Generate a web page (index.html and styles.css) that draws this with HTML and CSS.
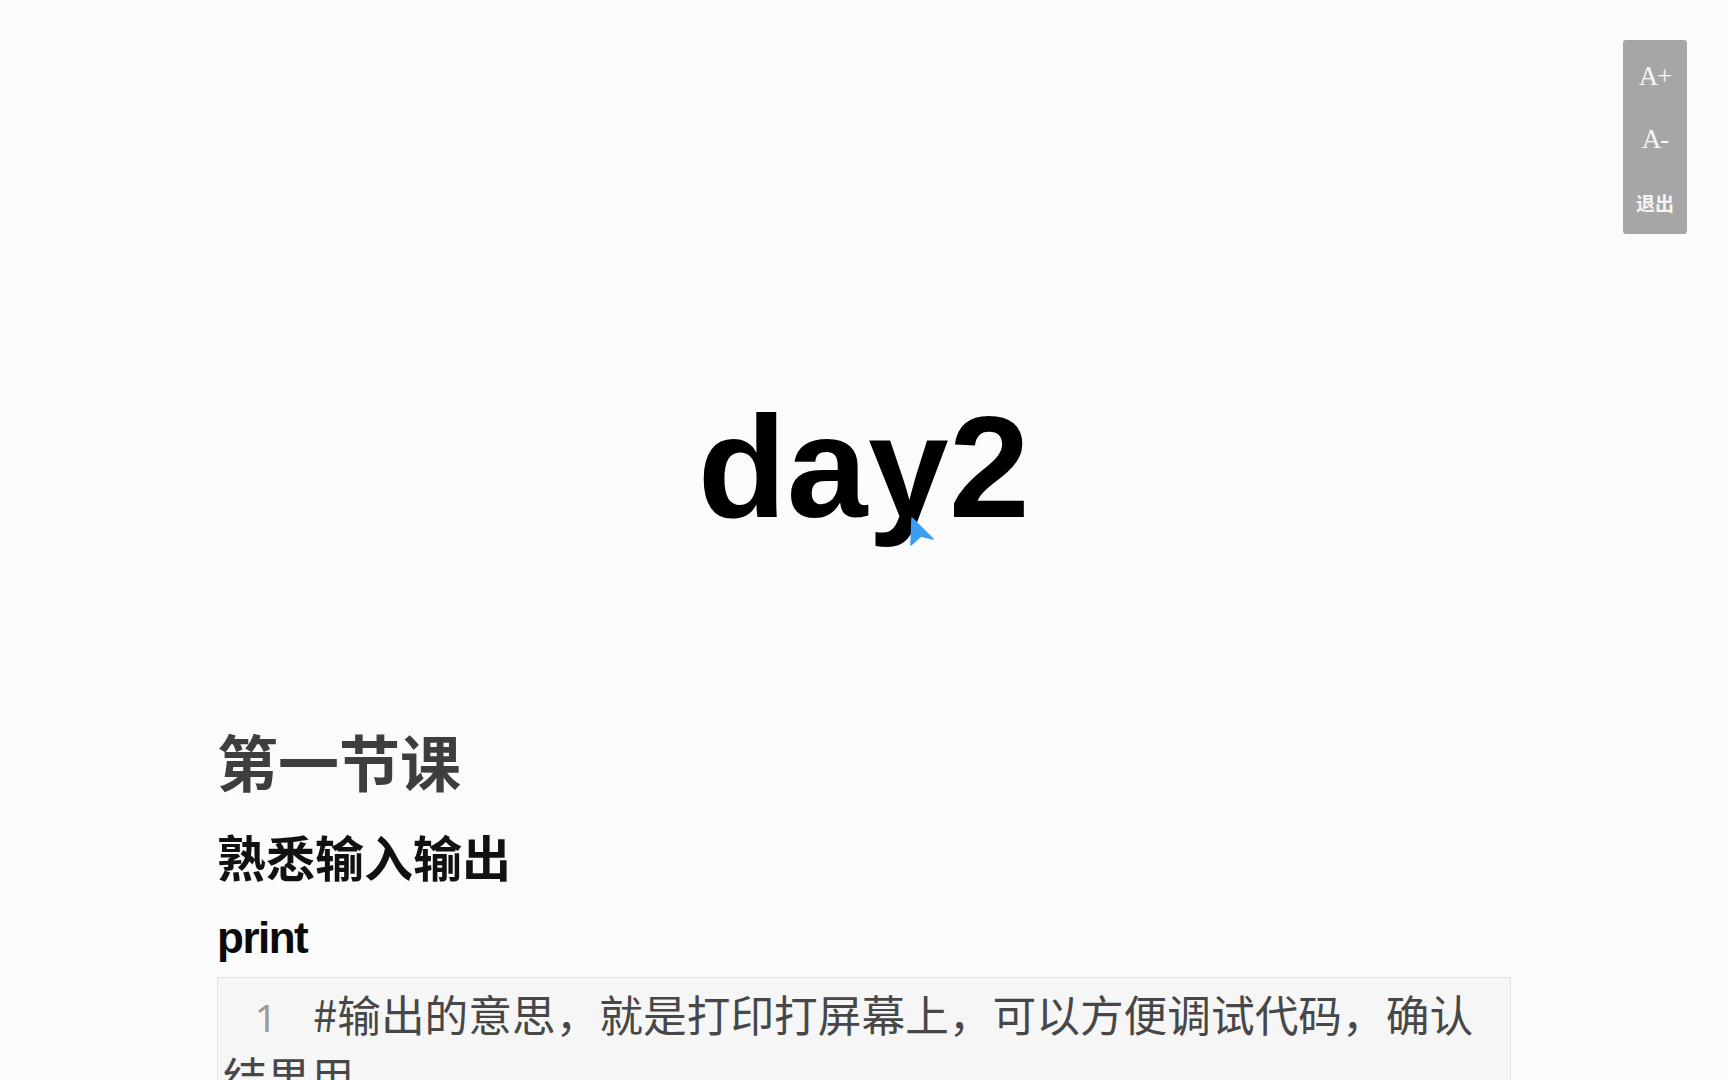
FILE: index.html
```html
<!DOCTYPE html>
<html lang="zh-CN">
<head>
<meta charset="utf-8">
<title>day2</title>
<link rel="stylesheet" href="styles.css">
</head>
<body>
<main class="page">
  <h1 class="title">day2</h1>
  <h2 class="lesson">第一节课</h2>
  <h3 class="topic">熟悉输入输出</h3>
  <h4 class="func">print</h4>
  <pre class="code"><span class="ln">1</span>#输出的意思，就是打印打屏幕上，可以方便调试代码，确认结果用</pre>
</main>
<div class="font-panel">
  <div class="fp-btn fp-a">A+</div>
  <div class="fp-btn fp-a">A-</div>
  <div class="fp-btn fp-exit">退出</div>
</div>
<svg class="cursor" width="26" height="30" viewBox="0 0 26 30">
  <polygon points="3,1 24,22 12,19 2,28" fill="#3a9ff0" stroke="#3a9ff0" stroke-width="1.5" stroke-linejoin="round"/>
</svg>
</body>
</html>
```
FILE: styles.css
```css
html, body {
  margin: 0;
  padding: 0;
  background: #fbfbfb;
}
body {
  font-family: "Liberation Sans", "Noto Sans CJK SC", sans-serif;
  color: #000;
}
.page {
  width: 1294px;
  margin: 0 auto;
  padding-top: 381px;
}
.title {
  margin: 0;
  font-family: "Liberation Sans", Arial, sans-serif;
  font-weight: 700;
  font-size: 145px;
  line-height: 172px;
  text-align: center;
  letter-spacing: 0.5px;
}
.lesson {
  margin: 168px 0 0 0;
  font-family: "Noto Sans CJK SC", sans-serif;
  font-weight: 700;
  font-size: 61px;
  line-height: 80px;
  color: #3e3e3e;
}
.topic {
  margin: 23px 0 0 0;
  font-family: "Noto Sans CJK SC", sans-serif;
  font-weight: 700;
  font-size: 49px;
  line-height: 64px;
  color: #111;
}
.func {
  margin: 22px 0 0 0;
  font-family: "Liberation Sans", Arial, sans-serif;
  font-weight: 700;
  font-size: 44px;
  line-height: 56px;
  letter-spacing: -1.5px;
  color: #0a0a0a;
}
.code {
  margin: 11px 0 0 0;
  border: 1px solid #e2e2e2;
  background: #f6f6f7;
  padding: 6px 16px 40px 5px;
  font-family: "Noto Sans CJK SC", sans-serif;
  font-size: 43.7px;
  line-height: 58px;
  color: #474747;
  white-space: pre-wrap;
  word-break: break-all;
}
.ln {
  display: inline-block;
  width: 54px;
  margin-right: 36px;
  text-align: right;
  font-family: "Noto Sans", sans-serif;
  font-size: 39px;
  color: #9a9a9a;
}
.font-panel {
  position: fixed;
  top: 40px;
  right: 41px;
  width: 64px;
  height: 194px;
  box-sizing: border-box;
  padding-top: 5px;
  background: #a6a6a6;
  border-radius: 3px;
  display: flex;
  flex-direction: column;
}
.fp-btn {
  height: 63px;
  display: flex;
  align-items: center;
  justify-content: center;
  color: #f6f6f6;
}
.fp-a {
  font-family: "Liberation Serif", "Times New Roman", serif;
  font-size: 27px;
  letter-spacing: -1px;
}
.fp-exit {
  font-family: "Noto Sans CJK SC", sans-serif;
  font-size: 19px;
  font-weight: 700;
}
.cursor {
  position: absolute;
  left: 909px;
  top: 517px;
}
```
